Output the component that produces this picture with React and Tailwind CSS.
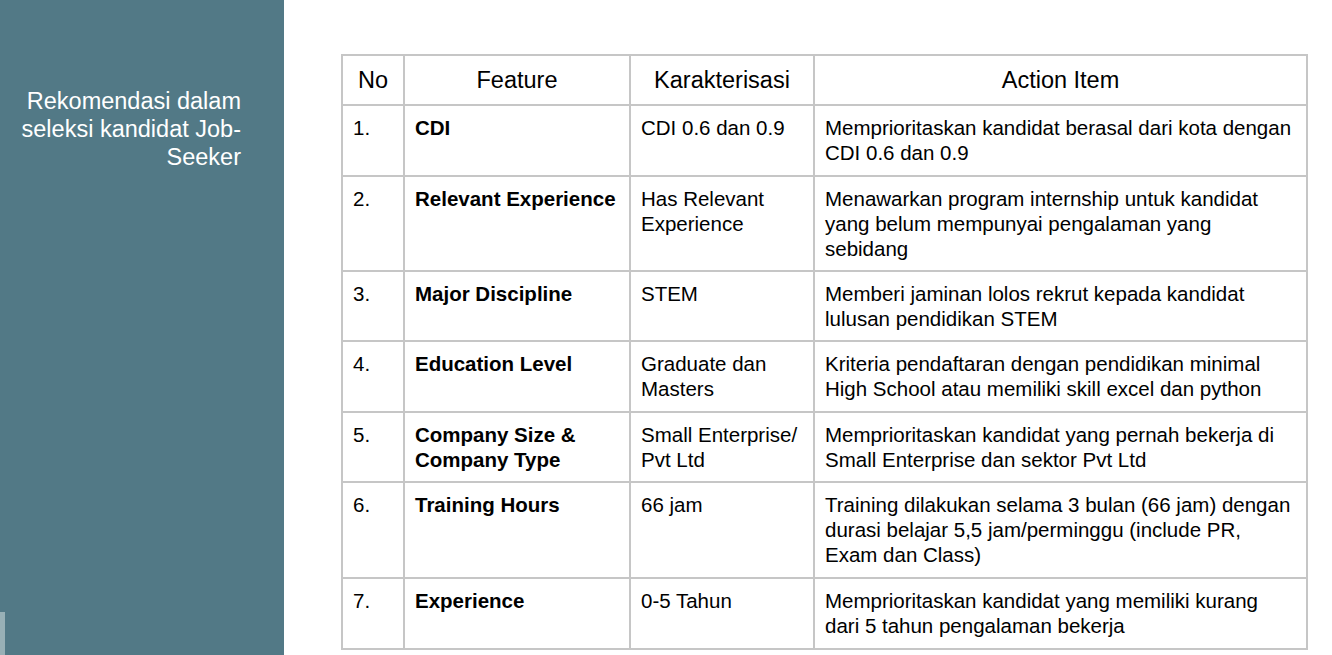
const rows = [
  { no: "1.", h: "h-[71px]", feature: ["CDI"], kar: ["CDI 0.6 dan 0.9"], action: ["Memprioritaskan kandidat berasal dari kota dengan", "CDI 0.6 dan 0.9"] },
  { no: "2.", h: "h-[95px]", feature: ["Relevant Experience"], kar: ["Has Relevant", "Experience"], action: ["Menawarkan program internship untuk kandidat", "yang belum mempunyai pengalaman yang", "sebidang"] },
  { no: "3.", h: "h-[70px]", feature: ["Major Discipline"], kar: ["STEM"], action: ["Memberi jaminan lolos rekrut kepada kandidat", "lulusan pendidikan STEM"] },
  { no: "4.", h: "h-[71px]", feature: ["Education Level"], kar: ["Graduate dan", "Masters"], action: ["Kriteria pendaftaran dengan pendidikan minimal", "High School atau memiliki skill excel dan python"] },
  { no: "5.", h: "h-[70px]", feature: ["Company Size &", "Company Type"], kar: ["Small Enterprise/", "Pvt Ltd"], action: ["Memprioritaskan kandidat yang pernah bekerja di", "Small Enterprise dan sektor Pvt Ltd"] },
  { no: "6.", h: "h-[96px]", feature: ["Training Hours"], kar: ["66 jam"], action: ["Training dilakukan selama 3 bulan (66 jam) dengan", "durasi belajar 5,5 jam/perminggu (include PR,", "Exam dan Class)"] },
  { no: "7.", h: "h-[71px]", feature: ["Experience"], kar: ["0-5 Tahun"], action: ["Memprioritaskan kandidat yang memiliki kurang", "dari 5 tahun pengalaman bekerja"] },
]

const Lines = ({ lines }) => (
  <>
    {lines.map((l, i) => (
      <div key={i} className="whitespace-nowrap">{l}</div>
    ))}
  </>
)

const Cell = ({ children, className = "" }) => (
  <div className={`border-r-2 border-b-2 border-[#c6c6c6] pt-[9px] pl-[10px] ${className}`}>
    {children}
  </div>
)

const HeadCell = ({ children }) => (
  <div className="h-[50px] border-r-2 border-b-2 border-[#c6c6c6] flex items-center justify-center text-[23.5px]">
    {children}
  </div>
)

export default function App() {
  return (
    <div className="flex h-[655px] w-full bg-white font-['Liberation_Sans',Arial,sans-serif] text-black overflow-hidden">
      <div className="relative w-[284px] shrink-0 bg-[#527986] pt-[87px] pr-[43px] text-right text-white text-[23.5px] leading-[28px]">
        <div>Rekomendasi dalam</div>
        <div>seleksi kandidat Job-</div>
        <div>Seeker</div>
        <div className="absolute left-0 bottom-0 w-[5px] h-[43px] bg-[#98b0b6]"></div>
      </div>

      <div className="pl-[57px] pt-[54px]">
        <div className="grid grid-cols-[62px_226px_184px_493px] border-t-2 border-l-2 border-[#c6c6c6] text-[20.5px] leading-[25px]">
          <HeadCell>No</HeadCell>
          <HeadCell>Feature</HeadCell>
          <HeadCell>Karakterisasi</HeadCell>
          <HeadCell>Action Item</HeadCell>
          {rows.map((r) => (
            <div key={r.no} className={`contents`}>
              <Cell className={r.h}>{r.no}</Cell>
              <Cell className={`${r.h} font-bold`}><Lines lines={r.feature} /></Cell>
              <Cell className={r.h}><Lines lines={r.kar} /></Cell>
              <Cell className={r.h}><Lines lines={r.action} /></Cell>
            </div>
          ))}
        </div>
      </div>
    </div>
  )
}
